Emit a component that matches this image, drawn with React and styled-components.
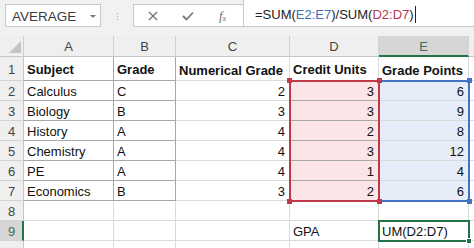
import React from 'react';
import styled, { createGlobalStyle } from 'styled-components';

const GlobalStyle = createGlobalStyle`
  html, body { margin: 0; padding: 0; background: #fff; }
  body { font-family: 'Liberation Sans', Arial, sans-serif; }
  * { box-sizing: border-box; }
`;

const Window = styled.div`
  width: 474px;
  height: 248px;
  overflow: hidden;
  display: flex;
  flex-direction: column;
  background: #fff;
`;

const Toolbar = styled.div`
  height: 36px;
  flex: none;
  display: flex;
  align-items: flex-start;
  background: #f1f1f1;
  padding-left: 5px;
`;

const NameBox = styled.div`
  margin-top: 4px;
  width: 96px;
  height: 23px;
  border: 1px solid #c8c8c8;
  background: #fff;
  display: flex;
  align-items: center;
  justify-content: space-between;
  padding: 1px 4px 0 6px;
  font-size: 13.5px;
  color: #3a3a3a;
`;

const DropArrow = styled.span`
  width: 0;
  height: 0;
  border-left: 3px solid transparent;
  border-right: 3px solid transparent;
  border-top: 3px solid #7a7a7a;
`;

const Grip = styled.div`
  width: 32px;
  height: 32px;
  display: flex;
  flex-direction: column;
  align-items: center;
  justify-content: center;
  gap: 2px;
`;

const GripDot = styled.span`
  width: 1px;
  height: 1px;
  background: #a8a8a8;
`;

const FxBox = styled.div`
  margin-top: 4px;
  width: 110px;
  height: 23px;
  border: 1px solid #c8c8c8;
  border-right: none;
  background: #fff;
  display: flex;
  align-items: center;
  padding-left: 1px;
`;

const IconSlot = styled.div`
  width: 35px;
  display: flex;
  justify-content: center;
  align-items: center;
  color: #7a7a7a;
`;

const FxGlyph = styled.span`
  font-family: 'Liberation Serif', 'Times New Roman', serif;
  font-style: italic;
  font-size: 13px;
  color: #707070;
  line-height: 1;
  sub {
    font-size: 8px;
    vertical-align: -1px;
  }
`;

const FormulaInput = styled.div`
  flex: 1;
  height: 27px;
  background: #fff;
  border-left: 1px solid #c8c8c8;
  border-bottom: 1px solid #c8c8c8;
  display: flex;
  align-items: center;
  padding: 3px 0 0 11px;
  font-size: 13px;
  color: #222;
  white-space: nowrap;
`;

const Ref = styled.span`
  color: ${(p) => p.$color};
`;

const Caret = styled.span`
  display: inline-block;
  width: 1px;
  height: 17px;
  background: #222;
  margin-left: 1px;
`;

const Sheet = styled.div`
  flex: 1;
  display: grid;
  grid-template-columns: 24px 90px 62px 114px 89px 90px 1fr;
  grid-template-rows: 21px 24px repeat(9, 20px);
  font-size: 13px;
  overflow: hidden;
`;

const Corner = styled.div`
  grid-row: 1;
  grid-column: 1;
  background: #efefef;
  border-right: 1px solid #cfcfcf;
  border-bottom: 1px solid #c6c6c6;
  display: flex;
  justify-content: flex-end;
  align-items: flex-end;
  padding: 0 2px 3px 0;
`;

const ColHeader = styled.div`
  grid-row: 1;
  grid-column: ${(p) => p.$c};
  background: ${(p) => (p.$selected ? '#d6d6d6' : '#efefef')};
  border-right: 1px solid #d2d2d2;
  border-bottom: ${(p) => (p.$selected ? '2px solid #217346' : '1px solid #c6c6c6')};
  color: ${(p) => (p.$selected ? '#3f6e52' : '#444')};
  display: flex;
  justify-content: center;
  align-items: center;
  padding-top: ${(p) => (p.$selected ? '1px' : '0')};
`;

const RowHeader = styled.div`
  grid-row: ${(p) => p.$r};
  grid-column: 1;
  background: ${(p) => (p.$selected ? '#d6d6d6' : '#efefef')};
  border-right: ${(p) => (p.$selected ? '2px solid #217346' : '1px solid #c6c6c6')};
  border-bottom: 1px solid #d2d2d2;
  color: ${(p) => (p.$selected ? '#3f6e52' : '#444')};
  display: flex;
  justify-content: center;
  align-items: center;
  padding-top: 2px;
  padding-left: ${(p) => (p.$selected ? '1px' : '0')};
`;

const Cell = styled.div`
  grid-row: ${(p) => p.$r};
  grid-column: ${(p) => p.$c};
  background: ${(p) => p.$fill || '#fff'};
  border-right: 1px solid ${(p) => (p.$strongV ? '#a8a8a8' : '#dadada')};
  border-bottom: 1px solid ${(p) => (p.$strongH ? '#a8a8a8' : '#dadada')};
  display: flex;
  align-items: center;
  justify-content: ${(p) => (p.$align === 'right' ? 'flex-end' : 'flex-start')};
  padding: ${(p) => (p.$lift ? '4px' : '2px')} 4px 0 3px;
  font-weight: ${(p) => (p.$bold ? 700 : 400)};
  color: #111;
  white-space: nowrap;
  overflow: visible;
`;

const RangeBox = styled.div`
  grid-row: ${(p) => p.$rows};
  grid-column: ${(p) => p.$c};
  margin: -1px -1px -1px -1px;
  border: 2px solid ${(p) => p.$color};
  position: relative;
  z-index: ${(p) => p.$z};
  pointer-events: none;
`;

const Handle = styled.span`
  position: absolute;
  width: 5px;
  height: 5px;
  background: ${(p) => p.$color};
  ${(p) => (p.$top ? 'top: -4px;' : 'bottom: -4px;')}
  ${(p) => (p.$left ? 'left: -4px;' : 'right: -4px;')}
`;

const ActiveCell = styled.div`
  grid-row: 10;
  grid-column: 6;
  margin: -1px -1px -1px -1px;
  border: 2px solid #217346;
  position: relative;
  z-index: 4;
  pointer-events: none;
`;

const FillHandle = styled.span`
  position: absolute;
  right: -4px;
  bottom: -4px;
  width: 6px;
  height: 6px;
  background: #217346;
  border: 1px solid #fff;
`;

const data = [
  ['Subject', 'Grade', 'Numerical Grade', 'Credit Units', 'Grade Points'],
  ['Calculus', 'C', '2', '3', '6'],
  ['Biology', 'B', '3', '3', '9'],
  ['History', 'A', '4', '2', '8'],
  ['Chemistry', 'A', '4', '3', '12'],
  ['PE', 'A', '4', '1', '4'],
  ['Economics', 'B', '3', '2', '6'],
  ['', '', '', '', ''],
  ['', '', '', 'GPA', 'UM(D2:D7)'],
  ['', '', '', '', ''],
];

const letters = ['A', 'B', 'C', 'D', 'E', ''];

function CancelIcon() {
  return (
    <svg width="10" height="10" viewBox="0 0 10 10">
      <path d="M1 1 L9 9 M9 1 L1 9" stroke="#777" strokeWidth="1.4" fill="none" />
    </svg>
  );
}

function CheckIcon() {
  return (
    <svg width="12" height="10" viewBox="0 0 12 10">
      <path d="M1 5 L4.5 8.5 L11 1.5" stroke="#777" strokeWidth="1.8" fill="none" />
    </svg>
  );
}

function CornerTriangle() {
  return (
    <svg width="12" height="12" viewBox="0 0 12 12">
      <polygon points="0,12 12,12 12,0" fill="#c4c4c4" />
    </svg>
  );
}

export default function App() {
  return (
    <Window>
      <GlobalStyle />
      <Toolbar>
        <NameBox>
          <span>AVERAGE</span>
          <DropArrow />
        </NameBox>
        <Grip>
          <GripDot />
          <GripDot />
          <GripDot />
        </Grip>
        <FxBox>
          <IconSlot><CancelIcon /></IconSlot>
          <IconSlot><CheckIcon /></IconSlot>
          <IconSlot>
            <FxGlyph>f<sub>x</sub></FxGlyph>
          </IconSlot>
        </FxBox>
        <FormulaInput>
          =SUM(<Ref $color="#3d6fc2">E2:E7</Ref>)/SUM(<Ref $color="#b53a50">D2:D7</Ref>)
          <Caret />
        </FormulaInput>
      </Toolbar>
      <Sheet>
        <Corner><CornerTriangle /></Corner>
        {letters.map((l, i) => (
          <ColHeader key={'h' + i} $c={i + 2} $selected={l === 'E'}>{l}</ColHeader>
        ))}
        {data.map((row, ri) => {
          const r = ri + 2;
          const rowNum = ri + 1;
          return (
            <React.Fragment key={'r' + ri}>
              <RowHeader $r={r} $selected={rowNum === 9}>{rowNum <= 9 ? rowNum : ''}</RowHeader>
              {row.map((v, ci) => {
                const inTable = rowNum <= 7;
                const inData = rowNum >= 2 && rowNum <= 7;
                const numeric = inData && ci >= 2;
                let fill;
                if (inData && ci === 3) fill = '#fbe5e6';
                if (inData && ci === 4) fill = '#e6edf8';
                const strongAB = inTable && ci <= 1;
                const strongD = inData && ci === 3;
                return (
                  <Cell
                    key={ci}
                    $r={r}
                    $c={ci + 2}
                    $align={numeric ? 'right' : 'left'}
                    $bold={rowNum === 1}
                    $fill={fill}
                    $strongV={strongAB}
                    $strongH={strongAB || strongD}
                    $lift={rowNum === 1 && (ci === 2 || ci === 4)}
                  >
                    {v}
                  </Cell>
                );
              })}
              <Cell $r={r} $c={7} />
            </React.Fragment>
          );
        })}
        <RangeBox $rows="3 / 9" $c={6} $color="#4472c4" $z={2}>
          <Handle $color="#4472c4" $top />
          <Handle $color="#4472c4" />
        </RangeBox>
        <RangeBox $rows="3 / 9" $c={5} $color="#c0394b" $z={3}>
          <Handle $color="#c0394b" $top $left />
          <Handle $color="#c0394b" $top />
          <Handle $color="#c0394b" $left />
          <Handle $color="#c0394b" />
        </RangeBox>
        <ActiveCell>
          <FillHandle />
        </ActiveCell>
      </Sheet>
    </Window>
  );
}
